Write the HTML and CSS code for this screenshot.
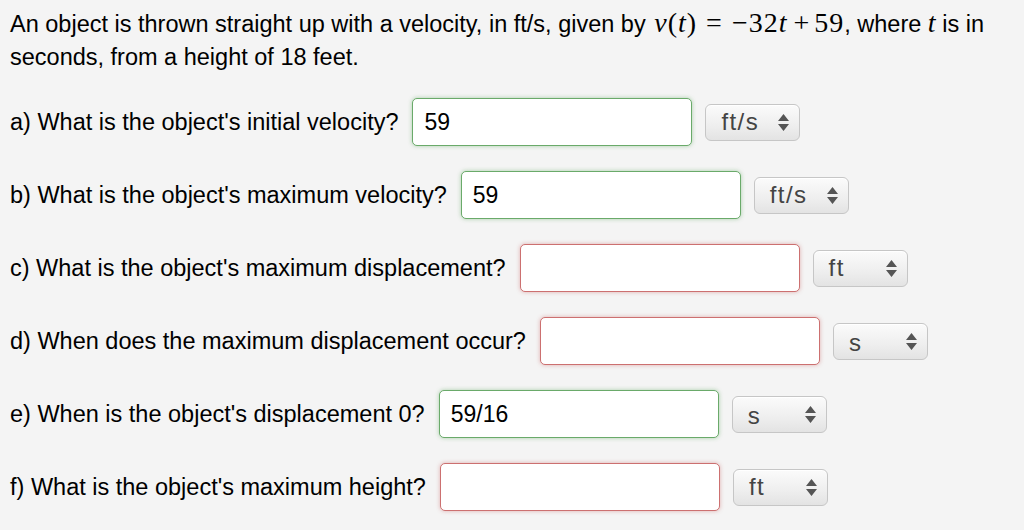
FILE: index.html
```html
<!DOCTYPE html>
<html>
<head>
<meta charset="utf-8">
<link rel="stylesheet" href="styles.css">
</head>
<body>
<div class="page">
  <p class="intro">An object is thrown straight up with a velocity, in ft/s, given by <span class="math"><i>v</i>(<i>t</i>)<span class="rel">=</span>−32<i>t</i><span class="bin">+</span>59</span>, where <i class="mi">t</i> is in seconds, from a height of 18 feet.</p>

  <div class="row">
    <span class="label">a) What is the object's initial velocity?</span>
    <div class="answer correct">59</div>
    <div class="unit"><span class="unit-text">ft/s</span><svg class="arrows" width="11" height="17" viewBox="0 0 11 17"><path d="M5.5 0 L11 7 L0 7 Z M0 10 L11 10 L5.5 17 Z" fill="#555"/></svg></div>
  </div>

  <div class="row">
    <span class="label">b) What is the object's maximum velocity?</span>
    <div class="answer correct">59</div>
    <div class="unit"><span class="unit-text">ft/s</span><svg class="arrows" width="11" height="17" viewBox="0 0 11 17"><path d="M5.5 0 L11 7 L0 7 Z M0 10 L11 10 L5.5 17 Z" fill="#555"/></svg></div>
  </div>

  <div class="row">
    <span class="label">c) What is the object's maximum displacement?</span>
    <div class="answer wrong"></div>
    <div class="unit"><span class="unit-text">ft</span><svg class="arrows" width="11" height="17" viewBox="0 0 11 17"><path d="M5.5 0 L11 7 L0 7 Z M0 10 L11 10 L5.5 17 Z" fill="#555"/></svg></div>
  </div>

  <div class="row">
    <span class="label">d) When does the maximum displacement occur?</span>
    <div class="answer wrong"></div>
    <div class="unit"><span class="unit-text low">s</span><svg class="arrows" width="11" height="17" viewBox="0 0 11 17"><path d="M5.5 0 L11 7 L0 7 Z M0 10 L11 10 L5.5 17 Z" fill="#555"/></svg></div>
  </div>

  <div class="row">
    <span class="label">e) When is the object's displacement 0?</span>
    <div class="answer correct">59/16</div>
    <div class="unit"><span class="unit-text low">s</span><svg class="arrows" width="11" height="17" viewBox="0 0 11 17"><path d="M5.5 0 L11 7 L0 7 Z M0 10 L11 10 L5.5 17 Z" fill="#555"/></svg></div>
  </div>

  <div class="row">
    <span class="label">f) What is the object's maximum height?</span>
    <div class="answer wrong"></div>
    <div class="unit"><span class="unit-text">ft</span><svg class="arrows" width="11" height="17" viewBox="0 0 11 17"><path d="M5.5 0 L11 7 L0 7 Z M0 10 L11 10 L5.5 17 Z" fill="#555"/></svg></div>
  </div>
</div>
</body>
</html>
```

FILE: styles.css
```css
html, body {
  margin: 0;
  padding: 0;
  background: #f4f4f4;
}

.page {
  padding: 8px 10px 0 10px;
  font-family: "Liberation Sans", Arial, sans-serif;
  font-size: 23.5px;
  color: #000;
}

.intro {
  margin: 0 0 24px 0;
  line-height: 33px;
  width: 1004px;
}

.math {
  font-family: "Liberation Serif", "Times New Roman", serif;
  font-size: 28px;
  line-height: 1;
  letter-spacing: 1px;
  white-space: nowrap;
  margin-left: 2px;
}

.math i {
  font-family: "Liberation Serif", "Times New Roman", serif;
  font-style: italic;
}

.mi {
  font-family: "Liberation Serif", "Times New Roman", serif;
  font-style: italic;
  font-size: 28px;
  line-height: 1;
}

.rel {
  margin: 0 9px 0 9px;
}

.bin {
  margin: 0 4px 0 6px;
}

.row {
  display: flex;
  align-items: center;
  height: 48px;
  margin-bottom: 25px;
}

.label {
  margin-right: 14px;
  white-space: nowrap;
}

.answer {
  box-sizing: border-box;
  width: 280px;
  height: 48px;
  background: #fff;
  border-radius: 5px;
  padding: 0 11px;
  display: flex;
  align-items: center;
  font-size: 23px;
  color: #000;
}

.answer.correct {
  border: 1px solid #6aaa6a;
  box-shadow: 0 0 4px rgba(80, 160, 80, 0.45);
}

.answer.wrong {
  border: 1px solid #cc7070;
  box-shadow: 0 0 4px rgba(200, 90, 90, 0.45);
}

.unit {
  box-sizing: border-box;
  width: 95px;
  height: 37px;
  margin-left: 13px;
  border: 1px solid #c6c6c6;
  border-radius: 6px;
  background: linear-gradient(#fbfbfb, #eeeeee 60%, #e3e3e3);
  box-shadow: inset 0 1px 0 #fff;
  display: flex;
  align-items: center;
  justify-content: space-between;
  padding: 0 10px 0 15px;
  color: #444;
  font-size: 24px;
  letter-spacing: 1.4px;
}

.unit-text.low {
  padding-top: 4px;
}

.arrows {
  display: block;
}
```
